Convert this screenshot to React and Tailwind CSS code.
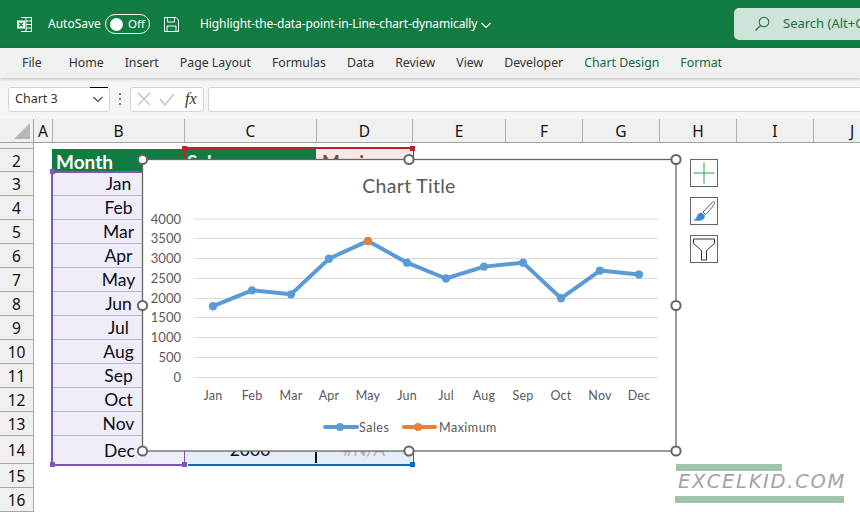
import React from 'react';

const uiFont = { fontFamily: '"Noto Sans", "Open Sans", sans-serif' };

const tabs = ['Home', 'Insert', 'Page Layout', 'Formulas', 'Data', 'Review', 'View', 'Developer'];

const columns = [
  { name: 'A', cls: 'w-[19px]' },
  { name: 'B', cls: 'w-[132px]' },
  { name: 'C', cls: 'w-[132px]' },
  { name: 'D', cls: 'w-[96px]' },
  { name: 'E', cls: 'w-[93px]' },
  { name: 'F', cls: 'w-[77px]' },
  { name: 'G', cls: 'w-[77px]' },
  { name: 'H', cls: 'w-[77px]' },
  { name: 'I', cls: 'w-[77px]' },
  { name: 'J', cls: 'w-[77px]' },
];

const months = ['Jan', 'Feb', 'Mar', 'Apr', 'May', 'Jun', 'Jul', 'Aug', 'Sep', 'Oct', 'Nov', 'Dec'];
const sales = [1800, 2200, 2100, 3000, 3450, 2900, 2500, 2800, 2900, 2000, 2700, 2600];
const monthX = [213, 252, 291, 329, 368, 407, 446, 484, 523, 561, 600, 639];
const gridY = [219, 238.5, 258.5, 278.5, 298.5, 317.5, 337.5, 357.5, 377.5];
const axis = [4000, 3500, 3000, 2500, 2000, 1500, 1000, 500, 0];

const valueY = (v) => 377.5 - v * 0.0396;

const ExcelIcon = () => (
  <svg width="17" height="17" viewBox="0 0 17 17" fill="none">
    <path d="M5 1.5h10.5v14H5" stroke="#fff" />
    <path d="M10 1.5v14M10 5h5.5M10 8.500h5.500M10 12h5.500" stroke="#fff" />
    <rect x="1" y="4.500" width="8" height="8" fill="#fff" />
    <path d="M3 6.500l4 4M7 6.500l-4 4" stroke="#107c41" strokeWidth="1.300" />
  </svg>
);

const SaveIcon = () => (
  <svg width="17" height="17" viewBox="0 0 17 17" fill="none" stroke="#fff">
    <path d="M1.500 1.500h11.500l2.500 2.500v11.500h-14z" />
    <path d="M4.500 1.500v4.500h7v-4.500M4 15.500v-5.500h9v5.500" />
  </svg>
);

const SearchIcon = () => (
  <svg className="shrink-0" width="16" height="16" viewBox="0 0 16 16" fill="none" stroke="#1d6f48" strokeWidth="1.100">
    <circle cx="10" cy="6" r="4.800" />
    <path d="M6.500 9.500L1.500 14.500" />
  </svg>
);

const Chevron = ({ color, size = 12 }) => (
  <svg width={size} height={size} viewBox="0 0 12 12" fill="none" stroke={color} strokeWidth="1.100">
    <path d="M1.500 4l4.500 4.500 4.500-4.500" />
  </svg>
);

const TitleBar = () => (
  <div className="flex h-12 items-center bg-[#107c41] text-white" style={uiFont}>
    <div className="ml-4">
      <ExcelIcon />
    </div>
    <span className="ml-[15px] w-[51px] text-[12px]">AutoSave</span>
    <div className="ml-[6px] flex h-5 w-[45px] items-center rounded-full border border-white pl-[4px]">
      <span className="h-[13px] w-[13px] rounded-full bg-white" />
      <span className="ml-[5px] text-[11.500px] leading-none">Off</span>
    </div>
    <div className="ml-[13px]">
      <SaveIcon />
    </div>
    <span className="ml-[20px] w-[276px] whitespace-nowrap text-[12px] tracking-[-0.100px]">Highlight-the-data-point-in-Line-chart-dynamically</span>
    <div className="ml-[4px] mt-[1px]">
      <Chevron color="#fff" />
    </div>
    <div className="ml-auto flex h-8 w-[126px] items-center overflow-hidden rounded-l-[5px] bg-[#cfe4d9] pl-[20px] text-[#1d6f48]">
      <SearchIcon />
      <span className="ml-[13px] whitespace-nowrap text-[13px]">Search (Alt+Q)</span>
    </div>
  </div>
);

const Ribbon = () => (
  <div
    className="relative z-10 flex h-[30px] items-center bg-[#f0f0f0] pl-[22px] pt-[1px] text-[12.300px] text-[#333] shadow-[0_1px_3px_rgba(0,0,0,0.25)]"
    style={uiFont}
  >
    <span className="mr-[27px]">File</span>
    <div className="flex gap-[21px]">
      {tabs.map((t) => (
        <span key={t}>{t}</span>
      ))}
      <span className="text-[#0f6b3e]">Chart Design</span>
      <span className="text-[#0f6b3e]">Format</span>
    </div>
  </div>
);

const FormulaBar = () => (
  <div className="flex h-[41px] items-center bg-[#f5f5f5] pl-2 pt-[1px]" style={uiFont}>
    <div className="relative flex h-[25px] w-[102px] items-center justify-between rounded-[3px] border border-[#d4d4d4] bg-white pl-[6px] pr-[5px] text-[12.500px] text-[#333]">
      Chart 3
      <Chevron color="#444" />
      <span className="absolute left-[81px] top-[-1px] h-[1px] w-[18px] bg-black" />
    </div>
    <div className="mx-[9px] flex h-[12px] w-[2px] flex-col justify-between">
      <span className="h-[2px] w-[2px] bg-[#777]" />
      <span className="h-[2px] w-[2px] bg-[#777]" />
      <span className="h-[2px] w-[2px] bg-[#777]" />
    </div>
    <div className="flex h-[25px] w-[74px] items-center rounded-[3px] border border-[#d4d4d4] bg-white pl-[6px]">
      <svg width="40" height="16" viewBox="0 0 40 16" fill="none" stroke="#bdbdbd" strokeWidth="1.200">
        <path d="M1 2l12 12M13 2L1 14" />
        <path d="M23 8l5 6 9-11" />
      </svg>
      <span className="ml-[8px] text-[16px] italic leading-none text-[#333]" style={{ fontFamily: '"Liberation Serif", serif' }}>
        fx
      </span>
    </div>
    <div className="ml-[4px] h-[25px] flex-1 rounded-l-[3px] border border-r-0 border-[#d4d4d4] bg-white" />
  </div>
);

const ColumnHeader = () => (
  <div className="flex h-[24px] border-b-[1.500px] border-[#a0a0a0] bg-[#f0f0f0] text-[15.500px] leading-[24px] text-[#111]" style={uiFont}>
    <div className="relative w-[34px] shrink-0 border-r border-[#a0a0a0]">
      <svg className="absolute left-[14px] top-[4px]" width="16" height="16" viewBox="0 0 16 16">
        <path d="M0 16L16 0v16z" fill="#b7b7b7" />
      </svg>
    </div>
    {columns.map((c) => (
      <div key={c.name} className={`${c.cls} shrink-0 border-r border-[#b0b0b0] text-center`}>
        {c.name}
      </div>
    ))}
  </div>
);

const RowHead = ({ n, h }) => (
  <div
    className={`${h} flex w-[34px] shrink-0 items-center justify-center border-r border-b border-[#a8a8a8] bg-[#f0f0f0] pt-[3px] text-[15.500px] text-[#111]`}
    style={uiFont}
  >
    {n}
  </div>
);

const Sheet = () => (
  <div className="text-[17.500px] text-[#0b0b20]" style={{ fontFamily: 'Lato, "Open Sans", sans-serif' }}>
    <div className="flex h-[6px]">
      <div className="w-[34px] border-r border-b border-[#a8a8a8] bg-[#f0f0f0]" />
    </div>
    <div className="flex">
      <RowHead n={2} h="h-[23px]" />
      <div className="w-[18px]" />
      <div className="h-[23px] w-[132px] bg-[#107c41] pl-[4px] text-[19px] font-bold leading-[26px] text-white">Month</div>
      <div className="h-[23px] w-[132px] bg-[#107c41] pl-[3px] text-[19px] font-bold leading-[26px] text-white">Sales</div>
      <div className="h-[23px] w-[96px] bg-[#f8e8e6] pl-[6px] text-[19px] font-bold leading-[26px] text-[#7b4a45]">Maximum</div>
    </div>
    {months.slice(0, 11).map((m, i) => (
      <div key={m} className="flex">
        <RowHead n={i + 3} h="h-6" />
        <div className="w-[18px]" />
        <div className="flex h-6 w-[132px] items-center justify-center border-b border-[#b9b6c6] bg-[#efedf8] pl-px pt-[2px]">{m}</div>
      </div>
    ))}
    <div className="flex">
      <RowHead n={14} h="h-[28px]" />
      <div className="w-[18px]" />
      <div className="flex h-[28px] w-[132px] items-center justify-center bg-[#efedf8] pl-[3px] pt-[3px]">Dec</div>
      <div className="flex h-[28px] w-[132px] items-center justify-center bg-[#e3edf7]">2000</div>
      <div className="flex h-[28px] w-[96px] items-center justify-center bg-[#e3edf7] text-[#a9b2bb]">#N/A</div>
    </div>
    <div className="flex">
      <RowHead n={15} h="h-6" />
    </div>
    <div className="flex">
      <RowHead n={16} h="h-6" />
    </div>
  </div>
);

const Handle = ({ cx, cy }) => (
  <circle cx={cx} cy={cy} r="4.600" fill="#fff" stroke="#666" strokeWidth="2" />
);

const LineChart = () => {
  const points = sales.map((v, i) => `${monthX[i]},${valueY(v)}`).join(' ');
  return (
    <svg
      className="absolute left-[132px] top-[149px]"
      width="556"
      height="314"
      viewBox="132 149 556 314"
      style={{ fontFamily: 'Lato, "Open Sans", sans-serif' }}
    >
      <rect x="142.500" y="159.500" width="533.500" height="291.500" fill="#fff" stroke="#666" strokeWidth="1.300" />
      <text x="409" y="192.500" textAnchor="middle" fontSize="19.500" letterSpacing="0.300" fill="#595959">
        Chart Title
      </text>
      {gridY.map((y, i) => (
        <g key={y}>
          <line x1="194" x2="658" y1={y} y2={y} stroke="#d9d9d9" strokeWidth="1.200" />
          <text x="181" y={y + 4.500} textAnchor="end" fontSize="13" fill="#595959">
            {axis[i]}
          </text>
        </g>
      ))}
      {months.map((m, i) => (
        <text key={m} x={monthX[i]} y="400" textAnchor="middle" fontSize="12.500" letterSpacing="0.200" fill="#595959">
          {m}
        </text>
      ))}
      <polyline points={points} fill="none" stroke="#5b9bd5" strokeWidth="4" strokeLinejoin="round" strokeLinecap="round" />
      {sales.map((v, i) => (
        <circle key={monthX[i]} cx={monthX[i]} cy={valueY(v)} r="4.200" fill="#5b9bd5" />
      ))}
      <circle cx={monthX[4]} cy={valueY(3450)} r="4" fill="#ed7d31" />
      <line x1="325" x2="357" y1="427" y2="427" stroke="#5b9bd5" strokeWidth="4" strokeLinecap="round" />
      <circle cx="340" cy="427" r="4" fill="#5b9bd5" />
      <text x="359" y="431.500" fontSize="12.500" letterSpacing="0.500" fill="#595959">
        Sales
      </text>
      <line x1="404" x2="435" y1="427" y2="427" stroke="#ed7d31" strokeWidth="4" strokeLinecap="round" />
      <circle cx="418" cy="427" r="4" fill="#ed7d31" />
      <text x="439" y="431.500" fontSize="12.500" letterSpacing="0.500" fill="#595959">
        Maximum
      </text>
      {[
        [142.500, 159.500],
        [409, 159.500],
        [676, 159.500],
        [142.500, 305.500],
        [676, 305.500],
        [142.500, 451],
        [409, 451],
        [676, 451],
      ].map(([cx, cy]) => (
        <Handle key={`${cx}-${cy}`} cx={cx} cy={cy} />
      ))}
    </svg>
  );
};

// formula range markers drawn over the cells
const RangeMarks = () => (
  <>
    <div className="absolute left-[51px] top-[171px] h-[294px] w-[2px] bg-[#7e57b2]" />
    <div className="absolute left-[51px] top-[171px] h-[2px] w-[92px] bg-[#7e57b2]" />
    <div className="absolute left-[51px] top-[464px] h-[2px] w-[133px] bg-[#7e57b2]" />
    <div className="absolute left-[184px] top-[451px] h-[13px] w-[1px] bg-[#7e57b2]" />
    <div className="absolute left-[50px] top-[169px] h-[5px] w-[5px] bg-[#7e57b2]" />
    <div className="absolute left-[50px] top-[462px] h-[5px] w-[5px] bg-[#7e57b2]" />
    <div className="absolute left-[182px] top-[462px] h-[5px] w-[5px] bg-[#7e57b2]" />

    <div className="absolute left-[186px] top-[147px] h-[2px] w-[226px] bg-[#b5262c]" />
    <div className="absolute left-[184px] top-[148px] h-[12px] w-[1px] bg-[#b5262c]" />
    <div className="absolute left-[413px] top-[148px] h-[12px] w-[1px] bg-[#b5262c]" />
    <div className="absolute left-[182px] top-[146px] h-[5px] w-[5px] bg-[#b5262c]" />
    <div className="absolute left-[410px] top-[146px] h-[5px] w-[5px] bg-[#b5262c]" />

    <div className="absolute left-[188px] top-[464px] h-[2px] w-[222px] bg-[#0a6ebd]" />
    <div className="absolute left-[413px] top-[451px] h-[12px] w-[1px] bg-[#0a6ebd]" />
    <div className="absolute left-[410px] top-[462px] h-[5px] w-[5px] bg-[#0a6ebd]" />
    <div className="absolute left-[315px] top-[452px] h-[11px] w-[2px] bg-[#111]" />
  </>
);

const ChartButton = ({ children }) => (
  <div className="flex h-[28px] w-[28px] items-center justify-center border-[1.500px] border-[#666] bg-white">{children}</div>
);

const ChartTools = () => (
  <div className="absolute left-[690px] top-[159px] flex flex-col gap-[10px]">
    <ChartButton>
      <svg width="22" height="22" viewBox="0 0 22 22" stroke="#2e9e4f" strokeWidth="1">
        <path d="M0.500 11h21M11 0.500v21" />
      </svg>
    </ChartButton>
    <ChartButton>
      <svg className="shrink-0" width="26" height="26" viewBox="0 0 26 26">
        <path d="M21.500 4c1.500-.8 2.500 0 2 1.500-.8 2.200-6 8.500-9 11l-2.500-2.500z" fill="#fff" stroke="#555" strokeWidth="1" />
        <path d="M10.500 14.500l3.500 3c-.2 2.500-1.500 4.500-4 5-2.500.4-6.500.2-8.500-.5 2.500-.3 3.500-1.500 4.500-3.800 1-2.500 2.500-3.700 4.500-3.700z" fill="#3c87d0" />
      </svg>
    </ChartButton>
    <ChartButton>
      <svg className="shrink-0" width="26" height="26" viewBox="0 0 26 26" fill="#fafafa" stroke="#333" strokeWidth="1">
        <path d="M2.500 3h21v4.500l-8 7v9.500h-5v-9.500l-8-7z" />
      </svg>
    </ChartButton>
  </div>
);

const Watermark = () => (
  <div className="absolute left-[675px] top-[464px] w-[170px]">
    <div className="ml-px h-[7px] w-[106px] bg-[#9fc3ab]" />
    <div
      className="ml-[3px] h-[25px] whitespace-nowrap text-[19.500px] italic leading-[22px] tracking-[1.700px] text-[#a3a3a3]"
      style={{ fontFamily: '"DejaVu Sans", sans-serif' }}
    >
      EXCELKID.COM
    </div>
    <div className="h-[7px] w-[169px] bg-[#9fc3ab]" />
  </div>
);

export default function App() {
  return (
    <div className="relative h-[512px] w-[860px] overflow-hidden bg-white">
      <TitleBar />
      <Ribbon />
      <FormulaBar />
      <ColumnHeader />
      <Sheet />
      <RangeMarks />
      <LineChart />
      <ChartTools />
      <Watermark />
    </div>
  );
}
